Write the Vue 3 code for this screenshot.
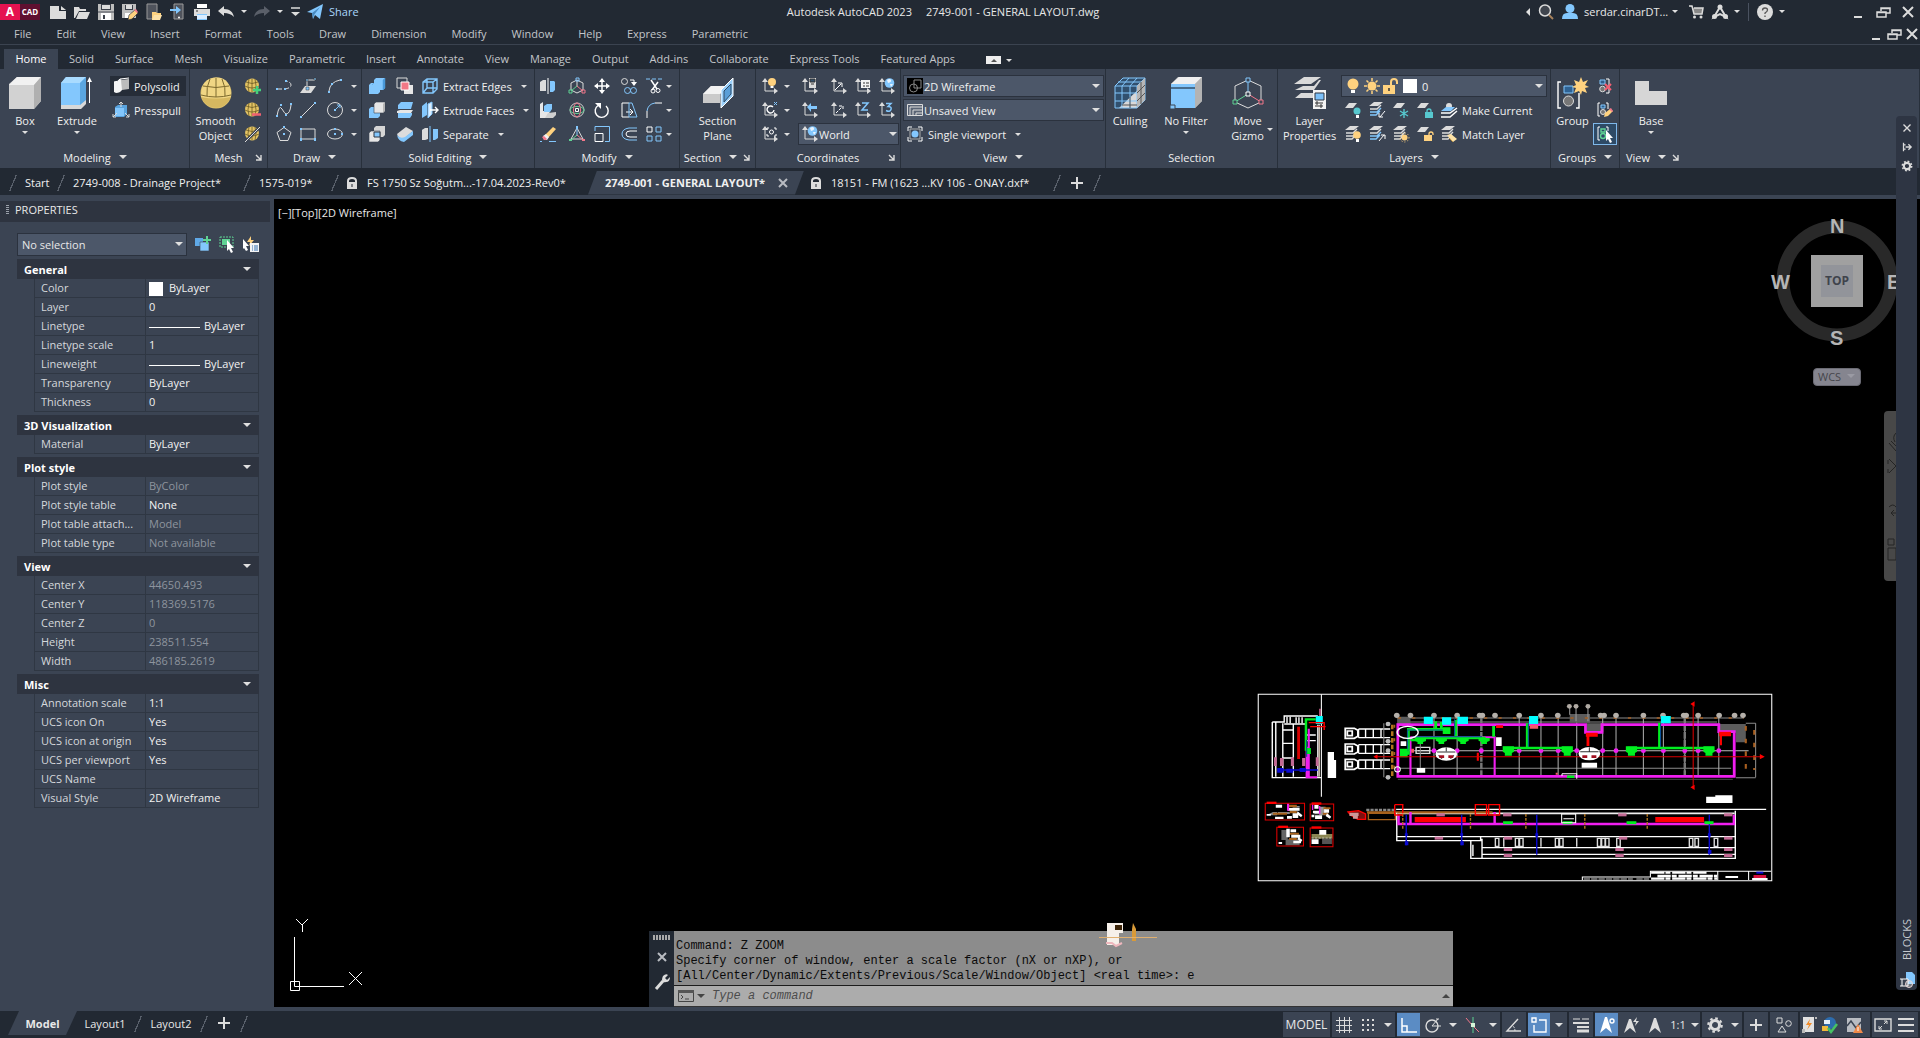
<script setup>
import { h } from 'vue'

const W = '#dcdcdc'
const B = '#83c7fd'
const Y = '#ffd27f'
const G = '#5fd394'
const R = '#f2778a'

const axes = `<path d="M3 2v11h10" fill="none" stroke="${W}"/><path d="M0 4l3-4 3 4zM12 10l4 3-4 3z" fill="${W}"/>`
const sheet = (x, y) => `<path d="M${x + 4} ${y}h8l-4 5h-8z" fill="${W}"/>`
const stack = `<path d="M5 0h9l-5 4H0z" fill="${W}"/><path d="M1 7h7l4-4M1 10h7l4-4M1 13h6l4-4" fill="none" stroke="${W}" stroke-width="1.4"/>`
const stackB = `<path d="M5 0h9l-5 4H0z" fill="${W}"/><path d="M1 7h7l4-4" fill="none" stroke="${W}" stroke-width="1.4"/><path d="M1 10h7l4-4M1 13h6l4-4" fill="none" stroke="${B}" stroke-width="1.4"/>`
const ball = `<circle cx="7" cy="7.500" r="7" fill="#e3c364"/><path d="M0 8Q7 12 14 8M1 4q6 3 12 0M7 1v13M4 1Q2 8 4 14M10 1q2 7 0 13" fill="none" stroke="#6b5a25" stroke-width=".8"/>`

const icons = {
  fileNew: `<path d="M0 2h9v5h7v8H0zM11 2l5 4h-5z" fill="${W}"/>`,
  open: `<path d="M0 3h5l1 2h6v2H5L1 14H0zM5 8h11l-3 7H2z" fill="${W}"/>`,
  save: `<path d="M0 0h16v16H0z" fill="#bdbdbd"/><path d="M3 0h10v6H3z" fill="#3a3f49"/><path d="M4 1h8v4H4z" fill="${W}"/><path d="M3 9h10v7H3z" fill="#fff"/><path d="M5 11h2v4H5z" fill="#3a3f49"/><path d="M0 8h16" stroke="#4a4f59"/>`,
  saveAs: `<path d="M0 0h14v14H0z" fill="#bdbdbd"/><path d="M3 1h8v5H3z" fill="#3a3f49"/><path d="M4 1h6v4H4z" fill="${W}"/><path d="M3 9h7v5H3z" fill="#fff"/><path d="M6 16l1-5 6-5 3 3-6 6z" fill="${Y}" stroke="#222933" stroke-width=".6"/><path d="M12 6l2-1 2 3-1 1z" fill="${R}"/>`,
  openWeb: `<path d="M1 0h10v15H1z" fill="#4f535c" stroke="#9a9a9a"/><path d="M6 8h4l1 1h4v2l-2 5H6z" fill="${Y}"/><path d="M8 11h8l-2 5H6z" fill="#ffe2a8"/>`,
  saveWeb: `<path d="M4 0h9v15H4z" fill="#4f535c" stroke="#9a9a9a"/><path d="M0 5h6V2l5 4-5 4V7H0z" fill="${B}"/><circle cx="9" cy="13.500" r="1" fill="#fff"/>`,
  print: `<path d="M3 0h10v4H3z" fill="#fff"/><path d="M0 5h16v7h-3v-2H3v2H0z" fill="${W}"/><path d="M3 10h10v6H3z" fill="${B}"/><path d="M3 11h10v4H3z" fill="#d9ecff"/><path d="M2 7h2" stroke="#333"/>`,
  undo: `<path d="M0 7l6-5v3c6 0 9 3 10 8-3-3-6-4-10-4v3z" fill="${W}"/>`,
  redo: `<path d="M16 7l-6-5v3C4 5 1 8 0 13c3-3 6-4 10-4v3z" fill="#5a5f69"/>`,
  custom: `<path d="M4 4h9" stroke="${W}" stroke-width="1.500"/><path d="M4 8h9l-4.500 4z" fill="${W}"/>`,
  plane: `<path d="M0 8L16 0l-3 15-5-4-2 4-1-6z" fill="${B}"/><path d="M5 9l8-6-6 8-1 4z" fill="#4789c0"/>`,
  search: `<circle cx="7" cy="6.500" r="5.500" fill="#40454e" stroke="${W}" stroke-width="1.500"/><path d="M11 11l4 4" stroke="#a8825c" stroke-width="2"/>`,
  user: `<circle cx="8" cy="4.500" r="4.500" fill="${B}"/><path d="M0 15q0-6 5-6h6q5 0 5 6z" fill="${B}"/>`,
  cart: `<path d="M1 2h3l2 8h8l1-6H6" fill="#888" stroke="${W}" stroke-width="1.500"/><circle cx="6.500" cy="13" r="1.500" fill="${W}"/><circle cx="13" cy="13" r="1.500" fill="${W}"/>`,
  apps: `<path d="M8 3L2 13l6-3 6 3z" fill="none" stroke="${W}" stroke-width="2"/><circle cx="8" cy="3" r="2.500" fill="${W}"/><circle cx="2.500" cy="12.500" r="2.500" fill="${W}"/><circle cx="13.500" cy="12.500" r="2.500" fill="${W}"/>`,
  help: `<circle cx="8" cy="8" r="8" fill="${W}"/><path d="M5.500 6.500Q5.500 4 8 4t2.500 2q0 1.500-2.500 3v1M8 11.500v1.500" fill="none" stroke="#555" stroke-width="1.300"/>`,
  min: `<path d="M4 13h8" stroke="${W}" stroke-width="2"/>`,
  restore: `<path d="M6 7V4h9v5h-4M2 8h9v5H2zM2 8.500h9M6 4.500h9" fill="none" stroke="${W}" stroke-width="1.500"/>`,
  close: `<path d="M3 3l10 10M13 3L3 13" stroke="${W}" stroke-width="2"/>`,
  closeS: `<path d="M4 4l8 8M12 4l-8 8" stroke="#b9bcc2" stroke-width="2"/>`,
  lock: `<path d="M4 8V6q0-3 4-3t4 3v2" fill="none" stroke="${W}" stroke-width="2"/><path d="M3 7h10v7H3z" fill="${W}"/><path d="M8 9v3" stroke="#222933"/>`,
  plus: `<path d="M8 2v12M2 8h12" stroke="${W}" stroke-width="2"/>`,
  corner: `<path d="M5 6l5 5M10 6v5H5" fill="none" stroke="${W}" stroke-width="1.400"/>`,

  polysolid: `<path d="M1 4q4 0 6-3l2 1v10q-2 3-6 3l-2-1z" fill="#f4f4f4"/><path d="M8 2l8-1v10l-7 1z" fill="#bcbcbc"/><path d="M1 4q4 0 6-3l9-1" fill="none" stroke="#fff"/>`,
  presspull: `<path d="M2 5l3-2h9v9l-3 3H2z" fill="#5aa4df"/><path d="M2 6h9v8H2z" fill="${B}"/><path d="M8 0v5M6 2l2-2 2 2M0 15l4-4M0 12v3h3M12 11l4 4M16 12v3h-3" fill="none" stroke="${W}"/>`,
  meshAdd: ball + `<path d="M12 8v8M8 12h8" stroke="#45cf7d" stroke-width="2.500"/>`,
  meshSub: ball + `<path d="M7 12.500h9" stroke="#ef6070" stroke-width="2.500"/>`,
  meshCrease: ball + `<path d="M0 16L15 1" stroke="#3b4453" stroke-width="3"/><path d="M0 16L15 1" stroke="${W}"/>`,

  pline: `<path d="M1 11h8q6-1 6-4t-5-4" fill="none" stroke="${W}" stroke-dasharray="5 2"/><path d="M0 10h2v2H0zM8 10h2v2H8zM9 2h2v2H9z" fill="${B}"/>`,
  plane3: `<path d="M5 8h11l-5 7H0z" fill="${W}"/><path d="M7 2v9M7 2h8" stroke="${W}" fill="none"/><path d="M6 9h3v3H6zM6 1h2v2H6zM14 0h2v2h-2z" fill="${B}" stroke="#333" stroke-width=".5"/>`,
  arc: `<path d="M2 13Q3 4 13 2" fill="none" stroke="${W}"/><path d="M1 13h2v2H1zM4 5h2v2H4zM13 1h2v2h-2z" fill="${B}"/>`,
  spline: `<path d="M1 14Q3 2 6 7t4 5Q14 12 15 3" fill="none" stroke="${W}"/><path d="M0 13h2v2H0zM4 2h2v2H4zM9 12h2v2H9zM14 1h2v2h-2z" fill="${B}"/>`,
  line: `<path d="M1 15L15 1" stroke="${W}"/><path d="M0 14h2v2H0zM14 0h2v2h-2z" fill="${B}"/>`,
  circle: `<circle cx="8" cy="8" r="7.500" fill="none" stroke="${W}"/><path d="M8 8l5-5M10 3h3v3" fill="none" stroke="${B}"/><path d="M7 7h2v2H7z" fill="${B}"/>`,
  polygon: `<path d="M8 1.500l7 5-3 8H4l-3-8z" fill="none" stroke="${W}"/><path d="M7 7h2v2H7zM7 0h2v2H7z" fill="${B}"/>`,
  rect: `<path d="M1 3h14v10H1z" fill="none" stroke="${W}"/><path d="M0 12h2v3H0zM14 12h2v3h-2zM0 2h2v2H0z" fill="${B}"/>`,
  ellipse: `<ellipse cx="8" cy="8" rx="7.500" ry="5" fill="none" stroke="${W}"/><path d="M7 7h2v2H7zM7 2h2v2H7zM14 7h2v2h-2z" fill="${B}"/>`,

  union: `<path d="M5 2l2-2h9v10l-2 2h-3v2l-2 2H0V7l2-2h3z" fill="${B}"/><path d="M16 0v10l-2 2V2zM5 5l-2 2" fill="#4a98d8" stroke="#4a98d8" stroke-width=".5"/>`,
  subtract: `<path d="M0 7l2-2h9v9l-2 2H0z" fill="${B}"/><path d="M5 2l2-2h9v9l-2 2H5z" fill="#e6e6e6" stroke="#3b4453" stroke-width=".6"/><path d="M16 0v9l-2 2V2z" fill="#b5b5b5"/>`,
  intersect: `<path d="M5 2l2-2h9v9l-2 2H5z" fill="#d5d5d5"/><path d="M0 7l2-2h9v9l-2 2H0z" fill="#e6e6e6" stroke="#3b4453" stroke-width=".6"/><path d="M5 6h6v5H5z" fill="${B}" stroke="#2c3440"/>`,
  interfere: `<path d="M0 0h10v10H0z" fill="#3b4453" stroke="${W}"/><path d="M9 7h7v9H7V9z" fill="#e6e6e6"/><path d="M4 4h8v8H4z" fill="#f27886" stroke="#fff"/>`,
  slice: `<path d="M1 3l3-3h12l-2 7H1zM1 11h14v2l-2 3H1z" fill="${B}"/><path d="M0 9l3-1h13l-2 3H0z" fill="#e6e6e6"/>`,
  thicken: `<path d="M0 8l9-7 7 4-8 7q-6 2-8-4z" fill="#dcdcdc"/><path d="M0 9q3 4 8 2l8-6v4l-9 7q-6-1-7-7z" fill="${B}"/>`,
  extractEdges: `<path d="M1 4l4-3h10v10l-4 4H1zM1 4h10v11M11 4l4-3M5 1v9M1 15l4-5h10" fill="none" stroke="${B}" stroke-width="1.400"/>`,
  extrudeFaces: `<path d="M0 4l5-4v13l-5 3z" fill="${B}"/><path d="M6 2l4-2v12l-4 4z" fill="#dceeff" stroke="${B}"/><path d="M8 8h7M13 5l3 3-3 3" fill="none" stroke="#fff" stroke-width="1.400"/>`,
  separate: `<path d="M0 4l5-2v11l-5 1zM11 3h5v9l-3 2h-2z" fill="${B}"/><path d="M0 4l3-2h3v11l-3 1H0z" fill="#dcdcdc"/><path d="M8 0v16" stroke="${B}"/>`,

  mirror3d: `<path d="M0 4l3-2h3v11H0z" fill="#dcdcdc"/><path d="M10 3h4l1 1v8l-2 2h-3z" fill="${B}"/><path d="M8 0v16" stroke="#fff"/>`,
  align3d: `<path d="M0 2l3-2v9h5l3 3-3 4H0z" fill="#e6e6e6"/><path d="M4 4l3-2h5v5l-2 3H4z" fill="${B}"/><path d="M8 11l8-1v3l-3 3H5z" fill="#cfcfcf"/>`,
  erase: `<path d="M5 9l8-8 3 2-8 9z" fill="${Y}"/><path d="M3 10l3-2 3 3-2 3H4z" fill="#f0f0f0"/><path d="M2 11l2-1 3 3-1 1H4z" fill="${R}"/><path d="M0 15.500h2M9 15.500h7" stroke="${B}"/>`,
  gizmoMove: `<path d="M8 2L2 5v7l6 3 6-3V5zM8 2v6" fill="none" stroke="${W}"/><path d="M8 8l-6 5" stroke="${G}"/><path d="M8 8l6 5" stroke="${R}"/><path d="M7 0h3v3H7z" fill="none" stroke="${B}"/><path d="M0 12h3v3H0z" fill="none" stroke="${G}"/><path d="M13 12h3v3h-3z" fill="none" stroke="${R}"/>`,
  gizmoRot: `<circle cx="8" cy="8" r="7" fill="none" stroke="#c9c9c9"/><ellipse cx="8" cy="8" rx="7" ry="3.500" fill="none" stroke="${G}"/><ellipse cx="8" cy="8" rx="3.500" ry="7" fill="none" stroke="${R}"/><path d="M6.500 6.500h3v3h-3z" fill="none" stroke="#fff"/>`,
  gizmoScale: `<path d="M8 2L2 13h12z" fill="none" stroke="${W}"/><path d="M8 2v8" stroke="${B}"/><path d="M8 9l-6 5" stroke="${G}"/><path d="M8 9l6 5" stroke="${R}"/><path d="M7 0h2v3H7z" fill="${B}"/><path d="M0 13h3v2H0z" fill="${G}"/><path d="M13 13h3v2h-3z" fill="${R}"/>`,
  move: `<path d="M8 1v14M1 8h14" stroke="#fff" stroke-width="1.500"/><path d="M5 4l3-4 3 4zM5 12l3 4 3-4zM4 5L0 8l4 3zM12 5l4 3-4 3z" fill="#fff"/>`,
  rotate: `<path d="M4 3.500A6.500 6.500 0 1 0 12 4" fill="none" stroke="#fff" stroke-width="1.400"/><path d="M1 1h6v6z" fill="#fff"/>`,
  scale: `<path d="M1 7.500h8v8H1z" fill="none" stroke="#fff"/><path d="M1 5V.500h14.500v15H11" fill="none" stroke="${B}"/>`,
  copy: `<circle cx="3.500" cy="3.500" r="3" fill="none" stroke="${W}"/><path d="M9 2h4v4" fill="none" stroke="#fff"/><path d="M10 4h6l-3 4z" fill="#fff"/><circle cx="6.500" cy="12.500" r="3" fill="none" stroke="${B}"/><circle cx="12.500" cy="12.500" r="3" fill="none" stroke="${B}"/>`,
  stretch: `<path d="M8 1H1v14h7" fill="none" stroke="#fff"/><path d="M5 10h6M9 7l3 3-3 3" fill="none" stroke="#fff"/><path d="M8 1h3l5 14H8z" fill="none" stroke="${B}"/>`,
  offset: `<path d="M16 2H8q-7 1-7 6t7 6h8" fill="none" stroke="${B}"/><path d="M16 5H9q-4 0-4 3t4 3h7" fill="none" stroke="#fff"/>`,
  trim: `<path d="M0 1h4M6 1h4M12 1h4" stroke="${B}"/><path d="M5 2l6 9M12 4l-6 8" stroke="#fff" stroke-width="1.500"/><circle cx="7" cy="13" r="2" fill="none" stroke="#fff"/><circle cx="12" cy="12.500" r="2" fill="none" stroke="#fff"/>`,
  fillet: `<path d="M1 16V9" stroke="#fff"/><path d="M1 9q1-7 8-8" stroke="${B}" fill="none"/><path d="M9 1h7" stroke="#fff"/>`,
  array: `<path d="M1 1h5v5H1z" fill="none" stroke="#fff"/><path d="M10 1h5v5h-5zM1 10h5v5H1zM10 10h5v5h-5z" fill="none" stroke="${B}"/>`,

  ucsOn: axes + `<circle cx="10" cy="4" r="4" fill="${Y}"/><path d="M8.500 8h3v2h-3z" fill="#fff"/>`,
  ucsRot: axes + `<path d="M11 5a3.500 3.500 0 1 0 1 3" fill="none" stroke="#fff" stroke-width="1.400"/><path d="M12 0l3 3M15 0l-3 3" stroke="${B}"/>`,
  ucsObj: axes + `<path d="M7 2H5v2M12 2h2v2M7 10H5V8M12 10h2V8" fill="none" stroke="#fff"/><circle cx="9.500" cy="6" r="2" fill="none" stroke="#fff"/>`,
  ucsNamed: axes + `<path d="M7 0h7v10H7z" fill="${W}"/><path d="M8 1h5v3H8zM9 6h3" fill="#35506a" stroke="#333"/>`,
  ucsPrev: axes + `<path d="M5 5l4-4v3h6v3H9v3z" fill="${B}"/>`,
  ucsOrigin: axes + `<path d="M4 12l6-6M7 5h4v4" fill="none" stroke="#fff"/>`,
  ucsZvec: axes + `<path d="M5 11l6-6M8 4h4v4" fill="none" stroke="#fff" stroke-dasharray="3 1"/>`,
  ucsView: axes + `<path d="M6 2h9v8H6z" fill="#f2f2f2"/><path d="M8 5h2M11 5h3M8 8h2M11 8h3" stroke="#333"/>`,
  ucsZ: axes + `<path d="M7 1h6l-6 7h6" fill="none" stroke="${B}" stroke-width="1.500"/>`,
  ucsWorld: axes + `<circle cx="10.500" cy="5" r="4.800" fill="${B}"/><path d="M8 2q3-2 4 0t-3 3zM11 6h3l-2 3z" fill="#e8f4ff"/>`,
  ucs3: axes + `<path d="M7 1.500h5l-3 3q4 0 3 3t-5 1" fill="none" stroke="${B}" stroke-width="1.500"/>`,
  vsWire: `<path d="M0 0h16v16H0z" fill="#000"/><path d="M7 2h7v8H7z" fill="none" stroke="#8a8a8a"/><circle cx="6.500" cy="10" r="4" fill="none" stroke="#8a8a8a"/>`,
  viewIco: `<path d="M.500 2.500h15v11H.500z" fill="#5a6475" stroke="${W}"/><path d="M3 13V5h12M6 13V8h9M9 13v-2h6" fill="none" stroke="${W}"/>`,
  viewport: `<path d="M1 5V1h4M11 1h4v4M15 11v4h-4M5 15H1v-4" fill="none" stroke="#fff"/><path d="M3 3h10v10H3z" fill="none" stroke="#aaa"/><circle cx="8" cy="8" r="3.500" fill="${B}"/>`,

  layOff: sheet(0, 1) + `<circle cx="12" cy="9" r="3.500" fill="#57c8cf"/><path d="M11 13h3v3h-3z" fill="#fff"/>`,
  layIso: stackB + `<path d="M16 9l-5 6M10 11v4h4" fill="none" stroke="#fff"/>`,
  layFrz: sheet(0, 1) + `<path d="M11 7v9M7 9l8 5M15 9l-8 5" stroke="#57c8cf" stroke-width="1.400"/>`,
  layLock: sheet(0, 1) + `<path d="M10 11V9q0-2 2-2t2 2v2" fill="none" stroke="#57c8cf" stroke-width="1.300"/><path d="M8 10h8v6H8z" fill="#57c8cf"/>`,
  layOn: stack + `<circle cx="12" cy="9" r="3.800" fill="${Y}"/><path d="M11 13h3v3h-3z" fill="#fff"/>`,
  layUniso: stackB + `<path d="M10 15l5-6M12 9h4v4" fill="none" stroke="#fff"/>`,
  layThaw: stack + `<circle cx="11.500" cy="11.500" r="3" fill="${Y}"/><circle cx="11.500" cy="11.500" r="4.500" fill="none" stroke="${Y}" stroke-dasharray="1 2"/>`,
  layUnlock: sheet(0, 1) + `<path d="M12 10V8q0-2 2-2t2 2v1" fill="none" stroke="${Y}" stroke-width="1.300"/><path d="M7 9h8v6H7z" fill="${Y}"/>`,
  layCur: `<circle cx="8" cy="4" r="3" fill="${W}"/><path d="M0 9l5-4h9l-4 4z" fill="${B}"/><path d="M0 11h9l7-5M0 15h9l7-6" fill="none" stroke="#fff" stroke-width="1.500"/>`,
  layMatch: stack + `<path d="M6 9l4-1 6 5-4 3z" fill="#ffe3a6"/><path d="M8 12l4 4" stroke="#b78f42"/>`,
  bulb: `<circle cx="8" cy="6" r="5.500" fill="${Y}"/><path d="M6 12h4v3H6z" fill="#fff"/>`,
  sun: `<circle cx="8" cy="8" r="4.500" fill="${Y}"/><path d="M8 0v3M8 13v3M0 8h3M13 8h3M2.500 2.500l2 2M11.500 11.500l2 2M13.500 2.500l-2 2M2.500 13.500l2-2" stroke="${Y}" stroke-width="1.500"/>`,
  unlock: `<path d="M8 7V4q0-3 3-3t3 3v2" fill="none" stroke="${Y}" stroke-width="2"/><path d="M0 7h12v9H0z" fill="${Y}"/><path d="M6 10v3" stroke="#333" stroke-width="1.500"/>`,
  swatch: `<path d="M1 1h14v14H1z" fill="#fff"/>`,

  ungroup: `<path d="M3 2h5v4H3z" fill="#2e5f8c" stroke="${B}"/><circle cx="5.500" cy="11" r="2.800" fill="#777" stroke="${W}"/><path d="M9 1h3v14H9" fill="none" stroke="#fff"/><path d="M8 6l6 6M14 6l-6 6" stroke="#f25f72" stroke-width="2"/>`,
  groupEdit: `<path d="M3 1H1v13h2M9 1h2v6" fill="none" stroke="#fff"/><path d="M4 3h4v3H4z" fill="#2e5f8c" stroke="${B}"/><circle cx="6" cy="10" r="2.500" fill="#777" stroke="${W}"/><path d="M7 15l1-4 5-4 3 2-5 5z" fill="${Y}"/><path d="M12 7l2-1 2 3-1 1z" fill="${R}"/>`,
  groupSel: `<path d="M3 1H1v13h2M9 1h2v4" fill="none" stroke="#fff"/><path d="M4 3h4v3H4z" fill="none" stroke="${G}" stroke-width="1.400"/><circle cx="6" cy="10" r="2.500" fill="none" stroke="${G}" stroke-width="1.400"/><path d="M9 4l7 8h-3l2 4-2 1-2-4-2 2z" fill="#fff"/>`,

  pickadd: `<path d="M0 2h8v8H0z" fill="#5fa8e6"/><path d="M5 6h9v9H5z" fill="${B}" stroke="#3b4453" stroke-width=".6"/><path d="M12 0v8M8 4h8" stroke="${G}" stroke-width="2"/>`,
  selObj: `<path d="M1 1h13v10H1z" fill="none" stroke="${G}" stroke-dasharray="2 1"/><path d="M3 3h8v6H3z" fill="${G}"/><path d="M8 4l7 8h-3l2 4-2 1-2-4-2 2z" fill="#fff"/>`,
  quickSel: `<path d="M8 0L4 6h3l-1 4 5-6H8z" fill="${Y}"/><path d="M0 3l6 7H3l2 4-2 1-2-3-1 1z" fill="#fff"/><path d="M7 7h9v9H7z" fill="#f4f4f4"/><path d="M9 10h1M11 10h4M9 12h1M11 12h4M9 14h1M11 14h4" stroke="#3570b0"/>`,

  grid: `<path d="M3.500 0v16M8.500 0v16M13.500 0v16M0 3.500h16M0 8.500h16M0 13.500h16" stroke="${W}"/>`,
  dots: `<path d="M2 2h2v2H2zM7 2h2v2H7zM12 2h2v2h-2zM2 7h2v2H2zM7 7h2v2H7zM12 7h2v2h-2zM2 12h2v2H2zM7 12h2v2H7zM12 12h2v2h-2z" fill="${W}"/>`,
  ortho: `<path d="M1 1v14h15M1 9h5v6" fill="none" stroke="#fff" stroke-width="1.500"/>`,
  polar: `<circle cx="7" cy="9" r="6" fill="none" stroke="${W}" stroke-width="1.400"/><path d="M7 9h9M7 9l6-7M11 2h3" fill="none" stroke="${W}"/>`,
  iso: `<path d="M1 1l6 7" stroke="${R}"/><path d="M9 10l5 5" stroke="${R}"/><path d="M8 0v6M8 10v6" stroke="${G}"/><path d="M6 6h4v4H6z" fill="#d7f5d9"/>`,
  angle: `<path d="M15 14H1L12 2" fill="none" stroke="${W}" stroke-width="1.400"/><path d="M9 14q0-3-2-5" fill="none" stroke="${W}" stroke-dasharray="2 1"/>`,
  osnap: `<path d="M3 8v7h12V3H8" fill="none" stroke="#fff" stroke-width="1.400"/><path d="M1 1h4v4H1z" fill="none" stroke="#fff" stroke-width="1.400"/>`,
  lweight: `<path d="M0 2h7M9 2h7" stroke="${W}"/><path d="M0 6h16" stroke="${W}" stroke-width="2"/><path d="M4 10h12" stroke="${W}" stroke-width="2"/><path d="M4 14h12" stroke="${W}" stroke-width="3"/>`,
  annoOn: `<path d="M6 0h2l5 16-6-5-6 5z" fill="#fff"/><circle cx="13" cy="4" r="2" fill="none" stroke="#fff" stroke-width="1.400"/>`,
  annoAdd: `<path d="M6 2h2l5 14-6-5-6 5z" fill="${W}"/><path d="M14 0l-4 5h3l-1 4 4-5h-3z" fill="${W}"/>`,
  anno: `<path d="M7 1h2l5 15-6-5-6 5z" fill="${W}"/>`,
  gear: `<circle cx="8" cy="8" r="4.500" fill="none" stroke="${W}" stroke-width="3"/><circle cx="8" cy="8" r="6.700" fill="none" stroke="${W}" stroke-width="2.200" stroke-dasharray="2.600 2.660"/>`,
  shapes: `<path d="M1 1h5v5H1z" fill="none" stroke="${W}"/><circle cx="12.500" cy="6.500" r="2.800" fill="none" stroke="${W}"/><path d="M6 9l4 6H2z" fill="none" stroke="${W}"/>`,
  perf: `<path d="M1 0h11v15H1z" fill="#e2e2e2"/><path d="M8 2L4 8h3l-2 5 5-7H7z" fill="#f28c2a"/><path d="M0 12h3v4H0zM13 0h2v2h-2z" fill="#bbb"/>`,
  trusted: `<circle cx="8" cy="6" r="6" fill="#2d6cad"/><path d="M2 3h6v4H2z" fill="#e6f0fa"/><path d="M0 9h6v5H0z" fill="#f0b93a"/><path d="M6 11l3 4 6-8" fill="none" stroke="#46c264" stroke-width="2.500"/>`,
  graph: `<path d="M0 1h14v14H0z" fill="#b9bcc2"/><path d="M0 9l4-5 5 7 5-6" fill="none" stroke="#3b4453" stroke-width="1.500"/><path d="M11 7l5 9H6z" fill="#f08a4a"/><path d="M11 10v4" stroke="#fff"/>`,
  clean: `<path d="M0 2h16v12H0z" fill="none" stroke="${W}" stroke-width="1.400"/><path d="M9 7l3-3M9 4h3v3M7 9l-3 3M4 9v3h3" fill="none" stroke="${W}"/>`,
  burger: `<path d="M0 2h16M0 8h16M0 14h16" stroke="${W}" stroke-width="2"/>`,
  wrench: `<path d="M2 15l7-8" stroke="${W}" stroke-width="3"/><path d="M9 2q3-3 5-1l-3 3 2 2 3-3q0 5-4 5-4 1-4-2 0-2 1-4z" fill="${W}"/>`,
  prompt: `<path d="M.500 2.500h15v11H.500z" fill="none" stroke="#444"/><path d="M0 2h16v3H0z" fill="#555"/><path d="M3 7l2 2-2 2M7 11h4" fill="none" stroke="#444"/>`,
  autohide: `<path d="M3 2v12M3 5h3M3 11h3M6 8h7M10 4l4 4-4 4" fill="none" stroke="${W}" stroke-width="1.800"/>`,
  blocks: `<path d="M7 0h6l3 3v9H7z" fill="${B}"/><path d="M1 7h8v7H1M3 7v7" fill="#3b4453" stroke="#fff"/><circle cx="10" cy="12" r="3.500" fill="#ffffff55" stroke="#e8d5d5"/>`,

  box: `<path d="M0 7L8 0h24v24l-7 8H0z" fill="#d2d2d2"/><path d="M0 8L8 0h24l-7 8z" fill="#f1f1f1"/><path d="M25 8l7-8v24l-7 8z" fill="#b0b0b0"/>`,
  extrude: `<path d="M0 6l5-6h20v24l-6 5H0z" fill="${B}"/><path d="M0 6l5-6h20l-6 6z" fill="#a9dbff"/><path d="M19 6l6-6v24l-6 5z" fill="#5aa6e0"/><path d="M0 28h19l6-5v4l-5 5H0z" fill="#d8d8d8"/><path d="M28.500 26V3" stroke="#fff"/><path d="M26 5l2.500-5L31 5z" fill="#fff"/>`,
  smooth: `<circle cx="16" cy="16" r="15.500" fill="#dcc06b"/><path d="M1 19a15.500 15.500 0 0 0 30 0Q16 22 1 19z" fill="#d6b860"/><path d="M1 20Q1 1 16 .500T31 20q-15 3-30 0z" fill="#f0d684"/><path d="M1 18q15 4 30 0M3 9q13 3 26 0M16 1v19M10 2Q6 10 7 19M22 2q4 8 3 17" fill="none" stroke="#7d6a2e"/>`,
  section: `<path d="M1 17l8-8h16l-7 8v9H1z" fill="#cacaca"/><path d="M1 17l8-8h16l-7 8z" fill="#f2f2f2"/><path d="M19 13L31 1v18L19 31z" fill="#9ad0fb" stroke="#fff"/><path d="M22 14l7-7v10l-7 8z" fill="#5a9fd8" stroke="#2c4a66"/>`,
  culling: `<path d="M1 9l8-8h22v22l-8 8H1z" fill="#31506e"/><path d="M31 6v17l-8 8H5z" fill="#d8d8d8"/><path d="M1 9l8-8h22v22l-8 8H1zM1 9h22v22M23 9l8-8M8 9v22M16 9v22M1 16h22l8-8M1 24h22l8-8M15 1L8 9M23 1l-7 8M4 5h23v22" fill="none" stroke="${B}"/><path d="M23 31V9l8-8v22z" fill="#b6b6b6"/><path d="M27 5v22M23 16l8-8M23 24l8-8M16 20v11M8 28h15" stroke="#555"/>`,
  nofilter: `<path d="M8 0h24v24l-7 7H1V7z" fill="#c4c4c4"/><path d="M1 7l8-7h23l-7 7z" fill="#f0f0f0"/><path d="M25 7l7-7v24l-7 7z" fill="#b3b3b3"/><path d="M1 7h24v24H1z" fill="${B}"/><path d="M1 11h24" stroke="#35506a" stroke-width="1.500"/><path d="M0 28h5v4H0z" fill="${B}" stroke="#3b4453"/>`,
  gizmo: `<path d="M16 3L3 9v16l13 6 13-6V9z" fill="none" stroke="${W}"/><path d="M16 4v12" stroke="${B}"/><path d="M16 17L3 25" stroke="${G}"/><path d="M16 17l13 8" stroke="${R}"/><path d="M14 1h4v4h-4z" fill="#3b4453" stroke="${B}"/><path d="M1 23h4v4H1z" fill="#3b4453" stroke="${G}"/><path d="M27 23h4v4h-4z" fill="#3b4453" stroke="${R}"/><path d="M14 15h4v4h-4z" fill="#3b4453" stroke="#fff"/>`,
  layerProps: `<path d="M10 0h17L17 7H0zM7 9H0M9 9h11l5-6h2l-7 10H1zM7 16h12v5H1z" fill="#dadada"/><path d="M19 13h13v19H19z" fill="#f4f4f4"/><path d="M21 16h9v7h-9z" fill="#7cc0f8" stroke="#2c3440"/><path d="M21 26h8M21 29h8M23 24v4M27 27v4" stroke="#333"/>`,
  group: `<path d="M4 5H1v26h3M19 31h3V16" fill="none" stroke="#fff" stroke-width="1.400"/><path d="M7 9h9v7H7z" fill="#2f6394" stroke="${B}"/><circle cx="11.500" cy="24" r="5" fill="#777" stroke="${W}"/><path d="M24 0l2 5 5-2-3 5 4 2-4 1 2 5-5-2-1 4-2-4-5 2 2-5-4-1 4-2-2-5 5 2z" fill="${Y}"/>`,
  base: `<path d="M0 4h14v10h18v14H0z" fill="#d6d6d6"/>`,
}

const Ic = (p) =>
  h('svg', {
    width: p.s || 16,
    height: p.s || 16,
    viewBox: p.s ? `0 0 ${p.s} ${p.s}` : '0 0 16 16',
    'aria-hidden': 'true',
    class: 'ic',
    innerHTML: icons[p.n],
  })
Ic.props = ['n', 's']

const menus = ['File', 'Edit', 'View', 'Insert', 'Format', 'Tools', 'Draw', 'Dimension', 'Modify', 'Window', 'Help', 'Express', 'Parametric']
const tabs = ['Home', 'Solid', 'Surface', 'Mesh', 'Visualize', 'Parametric', 'Insert', 'Annotate', 'View', 'Manage', 'Output', 'Add-ins', 'Collaborate', 'Express Tools', 'Featured Apps']
const quick = ['fileNew', 'open', 'save', 'saveAs', 'openWeb', 'saveWeb', 'print']
const draw = ['pline', 'plane3', 'arc', '', 'spline', 'line', 'circle', '', 'polygon', 'rect', 'ellipse', '']
const modify = ['mirror3d', 'gizmoMove', 'move', 'copy', 'trim', '', 'align3d', 'gizmoRot', 'rotate', 'stretch', 'fillet', '', 'erase', 'gizmoScale', 'scale', 'offset', 'array', '']
const coords = ['ucsOn', '', 'ucsNamed', 'ucsOrigin', 'ucsView', 'ucsWorld', 'ucsRot', '', 'ucsPrev', 'ucsZvec', 'ucsZ', 'ucs3', 'ucsObj', '']
const solid = [
  ['union', 'interfere', 'extractEdges', 'Extract Edges'],
  ['subtract', 'slice', 'extrudeFaces', 'Extrude Faces'],
  ['intersect', 'thicken', 'separate', 'Separate'],
]
const layerRows = [
  ['layOff', 'layIso', 'layFrz', 'layLock', 'layCur', 'Make Current'],
  ['layOn', 'layUniso', 'layThaw', 'layUnlock', 'layMatch', 'Match Layer'],
]

const groups = [
  { title: 'General', rows: [['Color', 'ByLayer', 'swatch'], ['Layer', '0'], ['Linetype', 'ByLayer', 'line'], ['Linetype scale', '1'], ['Lineweight', 'ByLayer', 'line'], ['Transparency', 'ByLayer'], ['Thickness', '0']] },
  { title: '3D Visualization', rows: [['Material', 'ByLayer']] },
  { title: 'Plot style', rows: [['Plot style', 'ByColor', 'dim'], ['Plot style table', 'None'], ['Plot table attach...', 'Model', 'dim'], ['Plot table type', 'Not available', 'dim']] },
  { title: 'View', rows: [['Center X', '44650.493', 'dim'], ['Center Y', '118369.5176', 'dim'], ['Center Z', '0', 'dim'], ['Height', '238511.554', 'dim'], ['Width', '486185.2619', 'dim']] },
  { title: 'Misc', rows: [['Annotation scale', '1:1'], ['UCS icon On', 'Yes'], ['UCS icon at origin', 'Yes'], ['UCS per viewport', 'Yes'], ['UCS Name', ''], ['Visual Style', '2D Wireframe']] },
]

const status = [
  [{ n: 'grid', w: 24 }, { n: 'dots', w: 24 }, { c: 1, w: 15 }],
  [{ n: 'ortho', w: 23, on: 1 }, { n: 'polar', w: 26 }, { c: 1, w: 14 }, { n: 'iso', w: 25 }, { c: 1, w: 15 }],
  [{ n: 'angle', w: 24 }],
  [{ n: 'osnap', w: 22, on: 1 }, { c: 1, w: 17 }],
  [{ n: 'lweight', w: 24 }],
  [{ n: 'annoOn', w: 23, on: 1 }, { n: 'annoAdd', w: 26 }, { n: 'anno', w: 22 }, { t: '1:1', w: 24 }, { c: 1, w: 10 }],
  [{ n: 'gear', w: 26 }, { c: 1, w: 14 }],
  [{ n: 'plus', w: 24 }],
  [{ n: 'shapes', w: 28 }],
  [{ n: 'perf', w: 20 }, { n: 'trusted', w: 19 }, { n: 'graph', w: 31 }],
  [{ n: 'clean', w: 22 }, { n: 'burger', w: 24 }],
]

// plan drawing data
const bubbles = [447, 486, 553, 619, 683, 691, 727, 796, 858, 906, 1028, 1038, 1072, 1150, 1206, 1265, 1272, 1306, 1366, 1410, 1434]
const axesX = [553, 619, 796, 858, 907, 960, 1034, 1072, 1150, 1207, 1268, 1306, 1365]
const nodes = [553, 619, 688, 796, 858, 907, 960, 1034, 1072, 1150, 1207, 1268, 1306, 1365]
const ducts = [514, 574, 636, 696]
const diffusers = [765, 933, 1116, 1337]
const trucks = [160, 207, 253]
const doors = [728, 785, 797, 899, 911, 1019, 1031, 1042, 1074, 1281, 1297, 1352]
const pinkTags = [[555, 470], [752, 470], [1080, 470], [1380, 470], [752, 504], [1070, 504], [1380, 504], [752, 522], [1070, 522], [1380, 522], [560, 400], [750, 400], [1078, 400], [1380, 400]]
const details = [[72, 370, 112, 50], [200, 372, 67, 50], [105, 442, 76, 56], [200, 444, 65, 56]]
</script>

<template>
  <div class="app">
    <header class="title">
      <div class="quick">
        <button class="logo" aria-label="Application menu"><b>A</b><span>CAD</span></button>
        <button v-for="q in quick" :key="q" class="ib" :aria-label="q"><Ic :n="q" /></button>
        <button class="ib" aria-label="Undo"><Ic n="undo" /></button>
        <button class="ca" aria-label="Undo list"><i class="caret s"></i></button>
        <button class="ib" aria-label="Redo"><Ic n="redo" /></button>
        <button class="ca" aria-label="Redo list"><i class="caret s"></i></button>
        <button class="ca custom" aria-label="Customize toolbar"><Ic n="custom" /></button>
        <button class="share"><Ic n="plane" />Share</button>
      </div>
      <h1><span>Autodesk AutoCAD 2023</span><span>2749-001 - GENERAL LAYOUT.dwg</span></h1>
      <div class="account">
        <button class="tri" aria-label="Collapse"></button>
        <button class="ib" aria-label="Search"><Ic n="search" /></button>
        <button class="userb"><Ic n="user" /><span>serdar.cinarDT...</span><i class="caret s"></i></button>
        <button class="ib" aria-label="Store"><Ic n="cart" /></button>
        <button class="ib" aria-label="Apps"><Ic n="apps" /></button>
        <i class="caret s"></i>
        <i class="bar"></i>
        <button class="ib" aria-label="Help"><Ic n="help" /></button>
        <i class="caret s"></i>
        <span class="win">
          <button class="ib" aria-label="Minimize"><Ic n="min" /></button>
          <button class="ib" aria-label="Restore"><Ic n="restore" /></button>
          <button class="ib" aria-label="Close"><Ic n="close" /></button>
        </span>
      </div>
    </header>

    <nav class="menu">
      <button v-for="m in menus" :key="m">{{ m }}</button>
      <span class="docwin">
        <button aria-label="Minimize drawing"><Ic n="min" /></button>
        <button aria-label="Restore drawing"><Ic n="restore" /></button>
        <button aria-label="Close drawing"><Ic n="close" /></button>
      </span>
    </nav>

    <nav class="rtabs">
      <button v-for="(t, i) in tabs" :key="t" :class="{ on: i === 0 }">{{ t }}</button>
      <span class="mini"><i></i></span><i class="caret s"></i>
    </nav>

    <div class="ribbon">
      <section class="panel p-modeling">
        <div class="body">
          <button class="big"><Ic n="box" :s="32" />Box<i class="caret s"></i></button>
          <button class="big wide"><Ic n="extrude" :s="32" />Extrude<i class="caret s"></i></button>
          <div class="col">
            <button class="row on"><Ic n="polysolid" />Polysolid</button>
            <button class="row"><Ic n="presspull" />Presspull</button>
          </div>
        </div>
        <div class="foot">Modeling<i class="caret"></i></div>
      </section>
      <section class="panel p-mesh">
        <div class="body">
          <button class="big"><Ic n="smooth" :s="32" />Smooth<br />Object</button>
          <div class="col">
            <button v-for="n in ['meshAdd', 'meshSub', 'meshCrease']" :key="n" class="ib" :aria-label="n"><Ic :n="n" /></button>
          </div>
        </div>
        <div class="foot">Mesh<Ic n="corner" class="cn" /></div>
      </section>
      <section class="panel p-draw">
        <div class="body">
          <button v-for="(n, i) in draw" :key="i" class="cell" :aria-label="n || 'More'"><Ic v-if="n" :n="n" /><i v-else class="caret s"></i></button>
        </div>
        <div class="foot">Draw<i class="caret"></i></div>
      </section>
      <section class="panel p-solid">
        <div class="body">
          <template v-for="r in solid" :key="r[3]">
            <button class="cell" :aria-label="r[0]"><Ic :n="r[0]" /></button>
            <button class="cell" :aria-label="r[1]"><Ic :n="r[1]" /></button>
            <button class="row"><Ic :n="r[2]" />{{ r[3] }}<i class="caret s"></i></button>
          </template>
        </div>
        <div class="foot">Solid Editing<i class="caret"></i></div>
      </section>
      <section class="panel p-modify">
        <div class="body">
          <button v-for="(n, i) in modify" :key="i" class="cell" :aria-label="n || 'More'"><Ic v-if="n" :n="n" /><i v-else class="caret s"></i></button>
        </div>
        <div class="foot">Modify<i class="caret"></i></div>
      </section>
      <section class="panel p-section">
        <div class="body">
          <button class="big"><Ic n="section" :s="32" />Section<br />Plane</button>
        </div>
        <div class="foot">Section<i class="caret"></i><Ic n="corner" class="cn" /></div>
      </section>
      <section class="panel p-coords">
        <div class="body">
          <button v-for="(n, i) in coords" :key="i" class="cell" :aria-label="n || 'More'"><Ic v-if="n" :n="n" /><i v-else class="caret s"></i></button>
          <label class="combo world"><Ic n="ucsWorld" /><select aria-label="UCS"><option>World</option></select><i class="caret"></i></label>
        </div>
        <div class="foot">Coordinates<Ic n="corner" class="cn" /></div>
      </section>
      <section class="panel p-view">
        <div class="body">
          <label class="combo"><Ic n="vsWire" /><select aria-label="Visual style"><option>2D Wireframe</option></select><i class="caret"></i></label>
          <label class="combo"><Ic n="viewIco" /><select aria-label="View"><option>Unsaved View</option></select><i class="caret"></i></label>
          <button class="row"><Ic n="viewport" />Single viewport<i class="caret s"></i></button>
        </div>
        <div class="foot">View<i class="caret"></i></div>
      </section>
      <section class="panel p-selection">
        <div class="body">
          <button class="big"><Ic n="culling" :s="32" />Culling</button>
          <button class="big wide"><Ic n="nofilter" :s="32" />No Filter<i class="caret s"></i></button>
          <button class="big"><Ic n="gizmo" :s="32" />Move<br />Gizmo<i class="caret s side"></i></button>
        </div>
        <div class="foot">Selection</div>
      </section>
      <section class="panel p-layers">
        <div class="body">
          <button class="big"><Ic n="layerProps" :s="32" />Layer<br />Properties</button>
          <div class="col">
            <label class="combo"><Ic n="bulb" /><Ic n="sun" /><Ic n="unlock" /><Ic n="swatch" /><select aria-label="Layer"><option>0</option></select><i class="caret"></i></label>
            <div v-for="r in layerRows" :key="r[5]" class="lrow">
              <button v-for="n in r.slice(0, 4)" :key="n" class="ib" :aria-label="n"><Ic :n="n" /></button>
              <button class="row"><Ic :n="r[4]" />{{ r[5] }}</button>
            </div>
          </div>
        </div>
        <div class="foot">Layers<i class="caret"></i></div>
      </section>
      <section class="panel p-groups">
        <div class="body">
          <button class="big"><Ic n="group" :s="32" />Group</button>
          <div class="col">
            <button class="ib" aria-label="Ungroup"><Ic n="ungroup" /></button>
            <button class="ib" aria-label="Group edit"><Ic n="groupEdit" /></button>
            <button class="ib sel" aria-label="Group selection"><Ic n="groupSel" /></button>
          </div>
        </div>
        <div class="foot">Groups<i class="caret"></i></div>
      </section>
      <section class="panel p-base">
        <div class="body">
          <button class="big"><Ic n="base" :s="32" />Base<i class="caret s"></i></button>
        </div>
        <div class="foot">View<i class="caret"></i><Ic n="corner" class="cn" /></div>
      </section>
    </div>

    <nav class="docs">
      <i class="sl"></i><button class="d1">Start</button>
      <i class="sl"></i><button class="d2">2749-008 - Drainage Project*</button>
      <i class="sl"></i><button class="d3">1575-019*</button>
      <i class="sl"></i><button class="d4"><Ic n="lock" />FS 1750 Sz Soğutm...-17.04.2023-Rev0*</button>
      <button class="cur">2749-001 - GENERAL LAYOUT*<Ic n="closeS" /></button>
      <button class="d5"><Ic n="lock" />18151 - FM (1623 ...KV 106 - ONAY.dxf*</button>
      <i class="sl"></i><button class="add" aria-label="New drawing"><Ic n="plus" /></button><i class="sl"></i>
    </nav>

    <div class="work">
      <aside class="props">
        <h2><i class="grip"></i>PROPERTIES</h2>
        <div class="ptop">
          <label class="combo"><select aria-label="Selection"><option>No selection</option></select><i class="caret"></i></label>
          <button v-for="n in ['pickadd', 'selObj', 'quickSel']" :key="n" class="ib" :aria-label="n"><Ic :n="n" /></button>
        </div>
        <div v-for="g in groups" :key="g.title" class="pg">
          <h3>{{ g.title }}<i class="caret"></i></h3>
          <table>
            <tbody>
              <tr v-for="r in g.rows" :key="r[0]">
                <th scope="row">{{ r[0] }}</th>
                <td :class="r[2]"><i v-if="r[2] === 'line' || r[2] === 'swatch'"></i>{{ r[1] }}</td>
              </tr>
            </tbody>
          </table>
        </div>
      </aside>

      <main class="canvas">
        <div class="vlabel">[−][Top][2D Wireframe]</div>

        <svg class="plan" viewBox="0 0 1568 630" preserveAspectRatio="none" fill="none" aria-label="General layout">
          <path d="M52 43H1516V602H52z" stroke="#fff" stroke-width="3" />
          <path d="M232 43V350" stroke="#fff" stroke-width="3" />
          <!-- cross section -->
          <g stroke="#fff" stroke-width="4">
            <path d="M92 126V293H232M92 126H126V108H222M102 126V290M122 130V290M152 132V290M122 150H152M122 190H152M122 234H152M126 132H190M222 134V290M190 165H216M190 182H216" />
            <path d="M134 110V130M143 110V130M160 112V130M168 112V130M177 112V130" />
            <path d="M226 134V290" stroke="#c9b8a8" />
          </g>
          <path d="M163 140h8v97h-8z" fill="#d80000" />
          <path d="M228 86V110" stroke="#b85a80" stroke-width="5" />
          <path d="M190 200V292H220M196 146V292" stroke="#f01ef0" stroke-width="6" />
          <path d="M188 212V118H216" stroke="#00e820" stroke-width="7" />
          <path d="M188 204h14v18h-14z" fill="#00f020" />
          <path d="M190 180V230" stroke="#0a4c8c" stroke-width="3" />
          <path d="M216 108h20v24h-20z" fill="#0ff" />
          <path d="M196 128h44v22M200 140h44" stroke="#f00" stroke-width="4" />
          <path d="M97 232h8v26h-8zM114 234h10v24h-10zM145 232h9v26h-9zM177 234h9v24h-9zM216 232h8v26h-8z" fill="#c26a94" />
          <path d="M106 270H222" stroke="#0a0ad0" stroke-width="5" />
          <path d="M106 264h18v14h-18zM132 266h20v12h-20zM170 264h18v12h-18z" fill="#0a0ad0" />
          <path d="M250 216h18v24h6v54h-24z" fill="#fff" />

          <!-- trucks -->
          <g v-for="y in trucks" :key="y" stroke="#fff" stroke-width="4">
            <path :d="`M338 ${y - 13}H428M338 ${y + 13}H428M338 ${y - 13}V${y + 13}M358 ${y - 13}V${y + 13}M380 ${y - 13}V${y + 13}M402 ${y - 13}V${y + 13}`" />
            <path :d="`M300 ${y - 15}H326L336 ${y - 9}V${y + 9}L326 ${y + 15}H300zM306 ${y - 7}H320V${y + 7}H306z`" stroke-width="5" />
          </g>

          <!-- plan grid -->
          <g stroke="#8a8a8a" stroke-width="3">
            <path d="M447 114H1436M410 130V292M455 265H1400M455 126H1360M1470 130V292M1442 130H1470M1414 293H1470" />
            <path v-for="x in axesX" :key="x" :d="`M${x} 106V286`" stroke="#aaa" />
          </g>
          <path d="M688 110V290M1268 110V290" stroke="#777" stroke-width="7" stroke-dasharray="20 3" />
          <path d="M470 212H1450" stroke="#bbb" stroke-width="3" />
          <path d="M448 110h38v22h-38zM988 130h48v26h-48zM940 102h58v26h-58zM1364 132h50v26h-50zM1414 132h28v55h-28z" fill="#5c5c5c" />
          <path d="M940 78V104M958 78V124M992 78V124" stroke="#999" stroke-width="3" />
          <path d="M450 114H1436M440 134V288" stroke="#a85f20" stroke-width="5" stroke-dasharray="9 32" />
          <path d="M1442 138V280M1466 150V270" stroke="#a85f20" stroke-width="6" stroke-dasharray="14 24" />
          <path d="M434 134V288" stroke="#b3741e" stroke-width="7" stroke-dasharray="14 6" />
          <circle v-for="x in bubbles" :key="x" :cx="x" cy="106" r="8" fill="#b5b0aa" />
          <circle v-for="x in [939, 958, 992]" :key="x" :cx="x" cy="79" r="7" fill="#b0aaa3" />
          <circle v-for="y in [132, 184, 212, 292]" :key="y" cx="422" :cy="y" r="7" fill="#bbb" />

          <!-- walls -->
          <path d="M450 298H1405" stroke="#666" stroke-width="2" />
          <path d="M450 134H985V157H1032V134H1365V155H1409V289H450z" stroke="#f01ef0" stroke-width="8" />
          <path d="M486 170V290M486 172H726V290" stroke="#f01ef0" stroke-width="6" />
          <circle v-for="x in nodes" :key="x" :cx="x" cy="212" r="7" fill="#f01ef0" />

          <!-- ventilation -->
          <g stroke="#00ee20" stroke-width="8">
            <path d="M480 224V148H590M558 124V148M574 126V150M615 120V170M500 174H700M486 180H530M819 130V203M750 204H945M1196 128V203M1105 204H1350M723 138V170" />
          </g>
          <path d="M478 214V150H590M612 118V166M822 130V200M1199 130V200M492 170H690" stroke="#0a4c9c" stroke-width="3" />
          <path v-for="x in ducts" :key="x" :d="`M${x - 16} 174h32v8l-8 4v6h-16v-6l-8-4z`" fill="#00f020" />
          <path v-for="x in diffusers" :key="x" :d="`M${x - 16} 199h32v16l-6 4v8h-20v-8l-6-4z`" fill="#00f020" />
          <path d="M578 142h22v20h-22zM456 206h22v26h-22z" fill="#00f020" />
          <path d="M524 110h26v22h-26zM576 112h26v22h-26zM620 110h30v22h-30zM824 108h26v24h-26zM1200 108h28v22h-28z" fill="#0ff" />
          <path d="M988 160h8v38h-8zM1368 160h6v36h-6zM730 136h20v8h-20zM675 218h6v24h-6zM986 158h34v12h-34zM1366 155h34v14h-34z" fill="#f00" />
          <path d="M826 134h24v12h-24zM488 206h8v12h-8zM900 278h6v6h-6z" fill="#f2596a" />
          <path d="M388 230H1490M1292 70V322" stroke="#d80000" stroke-width="3" />

          <g fill="#fff">
            <ellipse cx="588" cy="222" rx="31" ry="20" />
            <ellipse cx="996" cy="221" rx="31" ry="20" />
            <path d="M974 248h44v15h-44zM504 264h24v14h-24zM730 172h16v26h-16zM458 184h16v14h-16z" />
          </g>
          <path d="M562 216H614M588 202V214M970 215H1022M996 202V214M566 226l10 10M610 226l-10 10" stroke="#333" stroke-width="3" />
          <path d="M568 226h14v8h-14zM594 226h14v8h-14zM976 226h14v8h-14zM1002 226h14v8h-14z" fill="#a01020" />
          <ellipse cx="478" cy="157" rx="30" ry="18" stroke="#fff" stroke-width="4" />
          <path d="M502 202H541V220H502zM506 212H540" stroke="#ddd" stroke-width="4" />
          <path d="M514 192V264" stroke="#888" stroke-width="3" />
          <circle cx="449" cy="268" r="8" stroke="#fff" stroke-width="3" />
          <path d="M918 281H960V296M918 281V288" stroke="#fff" stroke-width="3" />
          <path d="M932 286h22v8h-22z" fill="#00f020" />
          <path d="M380 230l12-7v14zM1482 222l14 8-14 8zM1284 72l12-8v16zM1284 322l12-8v16z" fill="#f00" />

          <!-- elevation -->
          <path d="M445 388H1500" stroke="#fff" stroke-width="4" />
          <path d="M360 390H445" stroke="#888" stroke-width="8" stroke-dasharray="9 3" />
          <path d="M366 400H443V419H366z" stroke="#a8621c" stroke-width="4" />
          <path d="M450 400H1410" stroke="#eee" stroke-width="5" />
          <path d="M362 397H720" stroke="#a8621c" stroke-width="7" />
          <path d="M447 398V482H686V470M658 482H690V535H1412V392M658 482V535H690M447 470H1410M690 503H1410M690 523H1410M690 476V535M664 494V528" stroke="#fff" stroke-width="4" />
          <path v-for="x in doors" :key="x" :d="`M${x} 475h10v24h-10z`" stroke="#ddd" stroke-width="4" />
          <path d="M858 474V500M960 474V500M752 474V500" stroke="#ddd" stroke-width="4" />
          <path d="M452 406V432H1408V404M486 396V432M726 396V432" stroke="#f01ef0" stroke-width="7" />
          <path d="M498 411h146v16H498zM1184 411h139v16h-139z" fill="#f00" />
          <path d="M474 404V496M632 404V496M846 404V524M1338 404V524" stroke="#0a0ad0" stroke-width="4" />
          <path d="M470 460h8v8h-8zM470 484h10v12h-10zM628 460h8v8h-8zM628 484h10v12h-10zM842 460h8v10h-8zM1334 460h8v10h-8zM1334 510h10v12h-10z" fill="#0a0ad0" />
          <path d="M464 402V446M657 402V446M815 402V446M983 402V446M1161 402V446" stroke="#b3741e" stroke-width="4" stroke-dasharray="8 4" />
          <path v-for="(t, i) in pinkTags" :key="i" :d="`M${t[0]} ${t[1]}h24v9h-24z`" fill="#c26a94" />
          <path d="M750 424h28v9h-28zM920 424h28v9h-28zM1102 424h28v9h-28zM1324 424h26v9h-26z" fill="#00f020" />
          <path d="M917 402H957V428H917zM922 416H952" stroke="#fff" stroke-width="3" />
          <path d="M441 374H464V400M441 374V405H464M671 374H703V405H671zM709 374H740V405H709z" stroke="#f00" stroke-width="4" />
          <path d="M308 396l30-4 20 10v16h-22l-20-12z" fill="#7a1010" stroke="#f00" stroke-width="4" />
          <path d="M312 398h26v10h-26zM322 408h14v8h-14z" fill="#c99" />

          <!-- details -->
          <path d="M78 404l16-8h12v10h-16zM108 396h34v6h-34zM150 378h20v5h-20z" fill="#888" />
          <path d="M94 398h40v6H94zM138 374h24v8h-24zM142 392h20v8h-20z" fill="#a8621c" />
          <path d="M102 374h18v9h-18zM100 410h24v7h-24zM136 384h34v8h-34zM150 400h16v14h-16zM164 394l14 12-4 6-12-10zM134 408h14v8h-14zM76 402h12v5H76z" fill="#fff" />
          <path d="M137 370V392" stroke="#f01ef0" stroke-width="6" />
          <path d="M226 380h18v26h-18zM212 398h20v5h-20z" fill="#999" />
          <path d="M238 382h20v6h-20zM236 398h16v6h-16z" fill="#a8621c" />
          <path d="M212 374h12v12h-12zM208 392h18v8h-18zM214 406h20v11h-20zM240 388h14v10h-14zM248 400l12 10-4 6-12-8zM204 404h8v8h-8z" fill="#fff" />
          <path d="M207 372V390M227 378V402" stroke="#f01ef0" stroke-width="4" />
          <path d="M118 450h18v30h-18zM130 478h40v18h-40z" fill="#666" />
          <path d="M142 458h26v6h-26zM140 474h22v6h-22z" fill="#a8621c" />
          <path d="M132 446h10v26h-10zM144 448h16v9h-16zM146 464h26v9h-26zM152 482h22v8h-22zM166 470l12 10-4 6-10-8zM110 486h10v6h-10zM122 448V494" fill="#fff" />
          <path d="M204 462h60v14h-60z" fill="#8a8552" />
          <path d="M234 476h28v16h-28z" fill="#555" />
          <path d="M226 450h20v14h-20zM204 478h20v14h-20z" fill="#fff" />
          <path d="M204 474H262" stroke="#ddd" stroke-width="2" stroke-dasharray="6 4" />
          <g v-for="(d, k) in details" :key="k">
            <path :d="`M${d[0]} ${d[1]}h${d[2]}v${d[3]}h-${d[2]}z`" stroke="#e00000" stroke-width="3" />
            <path :d="`M${d[0] + 4} ${d[1] - 5}h28v7h-28z`" fill="#f00" />
          </g>
          <path d="M1329 350h26v-4h49v23h-75z" fill="#fff" />

          <!-- title block -->
          <path d="M976 600V591H1170V574H1514M1362 574V600M1450 574V600" stroke="#fff" stroke-width="3" />
          <path d="M980 597H1120M1130 597H1166" stroke="#ccc" stroke-width="3" stroke-dasharray="18 3" />
          <path d="M1172 578H1330M1190 588H1360M1172 596H1360" stroke="#fff" stroke-width="7" stroke-dasharray="38 3 14 5" />
          <path d="M1384 588h36v6h-36zM1460 594h44v6h-44z" fill="#fff" />
          <path d="M1464 585h36v9h-36z" fill="#d8103c" /><path d="M1472 575h20v6h-20z" fill="#0a0ad0" />
        </svg>

        <div class="cube">
          <svg width="130" height="140" viewBox="0 0 130 140" aria-hidden="true">
            <circle cx="67" cy="70" r="54" fill="none" stroke="#292929" stroke-width="13" />
          </svg>
          <b class="n">N</b><b class="w">W</b><b class="e">E</b><b class="so">S</b>
          <button class="top"><span>TOP</span></button>
        </div>
        <button class="wcs">WCS<i></i></button>
        <div class="navbar">
          <svg width="12" height="170" viewBox="0 0 12 170" fill="none" stroke="#242424" aria-hidden="true">
            <path d="M12 22q-4 4-1 9M5 32l7 8M7 30l5 5M5 48l7 7-7 7M4 49v4M4 62v-4M5 96q4-4 7 0M8 102h4M10 99l-3 3 3 3M4 128h6v6H4zM4 137h8v12H4z" />
          </svg>
        </div>

        <svg class="ucs" width="90" height="90" viewBox="0 0 90 90" fill="none" stroke="#fff" aria-label="UCS icon">
          <path d="M6.500 70.500h9v9h-9zM10.500 75.500V26M10.500 75.500H60M12 8l6 6 6-6M18.500 14v7M65 61l13 13M78 61L65 74" />
        </svg>

        <div class="cmd">
          <div class="cside">
            <i class="dotsgrip"></i>
            <button aria-label="Close command line"><Ic n="closeS" /></button>
            <button aria-label="Customize"><Ic n="wrench" /></button>
          </div>
          <div class="cmain">
            <svg class="over" width="60" height="32" viewBox="0 0 60 32" aria-hidden="true">
              <path d="M8 4h16v10h-4v12H8z" fill="#f6f0ea" /><path d="M16 6h7v5h-7z" fill="#3c2408" />
              <path d="M34 4l3 6v12h-4V10z" fill="#d99a38" /><path d="M0 18.500h58" stroke="#e0b070" />
              <path d="M7 24h6l4 3 6-3" fill="none" stroke="#eeb7bd" stroke-width="2" />
            </svg>
            <pre>Command: Z ZOOM
Specify corner of window, enter a scale factor (nX or nXP), or
[All/Center/Dynamic/Extents/Previous/Scale/Window/Object] &lt;real time&gt;: e</pre>
            <div class="cin">
              <Ic n="prompt" /><i class="caret dk"></i>
              <input aria-label="Command" placeholder="Type a command" />
              <i class="caret dk up"></i>
            </div>
          </div>
        </div>
      </main>
    </div>

    <footer class="bottom">
      <nav>
        <button class="cur">Model</button>
        <button>Layout1</button><i class="sl"></i>
        <button>Layout2</button><i class="sl"></i>
        <button aria-label="New layout"><Ic n="plus" /></button><i class="sl"></i>
      </nav>
      <div class="stat">
        <div class="sg"><button class="mdl">MODEL</button></div>
        <div v-for="(g, k) in status" :key="k" class="sg">
          <button v-for="(s, i) in g" :key="i" :class="{ on: s.on }" :style="{ width: s.w + 'px' }" :aria-label="s.n || s.t || 'Options'">
            <Ic v-if="s.n" :n="s.n" /><i v-else-if="s.c" class="caret"></i><template v-else>{{ s.t }}</template>
          </button>
        </div>
      </div>
    </footer>

    <aside class="palette">
      <button aria-label="Close palette"><Ic n="close" /></button>
      <button aria-label="Auto-hide"><Ic n="autohide" /></button>
      <button aria-label="Settings"><Ic n="gear" /></button>
      <span>BLOCKS</span>
      <Ic n="blocks" />
    </aside>
  </div>
</template>

<style>
body { margin: 0; background: #222933; }
.ic { display: block; flex: none; overflow: visible; }
</style>

<style scoped>
.app { position: relative; display: flex; flex-direction: column; min-height: 100vh; overflow: hidden; font: 11px/15px "Open Sans", "Noto Sans", sans-serif; color: #e8e8e8; background: #222933; }
button, select, input { font: inherit; color: inherit; background: none; border: 0; padding: 0; margin: 0; }
button { display: flex; align-items: center; white-space: nowrap; }
h1, h2, h3, pre { margin: 0; font: inherit; }
.ib { width: 24px; height: 24px; justify-content: center; flex: none; }
.caret { flex: none; width: 0; height: 0; border: 4px solid transparent; border-top-color: #e0e0e0; border-bottom: 0; }
.caret.s { border-width: 3px; border-bottom: 0; }
.caret.dk { border-top-color: #444; }
.caret.up { transform: rotate(180deg); }

.title { display: flex; align-items: center; height: 23px; }
.quick { display: flex; align-items: center; width: 360px; }
.logo { width: 40px; height: 16px; margin-right: 6px; background: #5f1030; }
.logo b { width: 20px; height: 16px; background: #e51250; font-size: 12px; line-height: 16px; text-align: center; color: #fff; }
.logo span { flex: 1; font: bold 8px/16px "Open Sans", sans-serif; text-align: center; color: #fff; }
.ca { width: 11px; height: 24px; justify-content: center; }
.ca.custom { width: 20px; }
.quick .ca + .ib { margin-left: 1px; }
.share { gap: 6px; color: #a9d6fb; margin-left: 2px; }
.title h1 { flex: 1; display: flex; justify-content: center; gap: 14px; }
.account { display: flex; align-items: center; width: 394px; }
.tri { width: 0; height: 0; border: 4px solid transparent; border-left: 0; border-right-color: #e0e0e0; margin-right: 4px; }
.userb { gap: 6px; margin: 0 6px 0 4px; }
.userb .caret { margin-left: -2px; }
.account > .caret { margin: 0 4px 0 2px; }
.bar { width: 1px; height: 18px; background: #4a5260; margin: 0 4px; }
.win { display: flex; gap: 1px; margin-left: auto; }

.menu { display: flex; align-items: center; gap: 25px; height: 21px; padding: 0 0 0 14px; border-bottom: 1px solid #3b4350; color: #c3c6ca; box-sizing: border-box; height: 22px; }
.docwin { display: flex; margin-left: auto; gap: 2px; }
.rtabs { display: flex; align-items: flex-end; height: 24px; padding-left: 4px; color: #c3c6ca; }
.rtabs button { height: 20px; padding: 0 10px 1px 11px; }
.rtabs .on { background: #3b4453; color: #fff; width: 54px; justify-content: center; padding: 0 0 1px; }
.mini { width: 15px; height: 8px; background: #eee; margin: 0 5px 5px 21px; display: flex; justify-content: center; align-items: center; }
.mini i { border: 3px solid transparent; border-top: 0; border-bottom-color: #555; }
.rtabs > .caret { margin-bottom: 7px; }

.ribbon { display: flex; height: 99px; background: #3b4453; padding-left: 1px; color: #f0f0f0; }
.panel { display: flex; flex-direction: column; flex: none; box-sizing: border-box; border-right: 1px solid #28303b; }
.body { display: flex; height: 72px; margin-top: 5px; }
.foot { position: relative; display: flex; align-items: center; justify-content: center; gap: 8px; height: 22px; }
.foot .cn { position: absolute; right: 0; top: 3px; }
.big { flex-direction: column; width: 46px; padding-top: 3px; text-align: center; justify-content: flex-start; height: 72px; flex: none; line-height: 15px; }
.big svg { margin-bottom: 4px; }
.big .caret { margin-top: 3px; }
.col { display: flex; flex-direction: column; }
.row { height: 24px; gap: 5px; }
.row .caret { margin-left: 4px; }
.cell { height: 24px; justify-content: center; min-width: 0; }

.p-modeling { width: 189px; }
.p-modeling .body { padding-left: 1px; }
.p-modeling .big.wide { width: 58px; }
.p-modeling .col { width: 76px; margin-left: 4px; }
.p-modeling .row { padding-left: 3px; }
.p-modeling .row.on { height: 20px; margin: 2px 0; background: #262d38; }
.p-mesh { width: 78px; }
.p-mesh .big { width: 51px; }
.p-draw { width: 94px; }
.p-draw .body { display: grid; grid-template: repeat(3, 24px) / 24px 24px 30px 8px; padding-left: 4px; }
.p-solid { width: 173px; }
.p-solid .body { display: grid; grid-template: repeat(3, 24px) / 24px 32px 1fr; padding-left: 3px; }
.p-solid .row { padding-left: 1px; }
.p-modify { width: 145px; }
.p-modify .body { display: grid; grid-template: repeat(3, 24px) / 26px 32px 18px 36px 14px 16px; }
.p-section { width: 76px; }
.p-section .big { width: 75px; }
.p-section .foot { padding-right: 14px; }
.p-coords { width: 145px; }
.p-coords .body { display: grid; grid-template: repeat(3, 24px) / 28px 6px 40px 18px 30px 18px; }
.p-view { width: 205px; }
.p-view .body { flex-direction: column; padding: 0 1px 0 2px; }
.p-view .row { padding-left: 4px; }
.p-selection { width: 172px; }
.p-selection .big { width: 48px; position: relative; }
.p-selection .big.wide { width: 64px; }
.p-selection .big:last-child { width: 59px; }
.side { position: absolute; right: 4px; top: 51px; }
.p-layers { width: 273px; }
.p-layers .big { width: 63px; }
.p-layers .col { width: 206px; }
.lrow { display: flex; }
.lrow .row { padding-left: 4px; }
.p-groups { width: 69px; }
.p-groups .big { width: 42px; padding-left: 1px; }
.p-groups .sel { height: 22px; margin-top: 1px; background: #2e4a66; outline: 1px solid #7fb8ea; outline-offset: -1px; }
.p-base { flex: 1; }
.p-base .big { width: 62px; }
.p-base .foot { width: 64px; padding-right: 12px; box-sizing: border-box; }

.combo { position: relative; display: flex; align-items: center; box-sizing: border-box; height: 22px; margin: 1px 0; padding: 0 3px; background: #4c5769; border: 1px solid #2b323e; }
.combo select { appearance: none; flex: 1; min-width: 0; padding-left: 1px; outline: 0; }
.combo option { color: #222; }
.world { grid-column: 3 / 7; margin: 1px -3px 1px 8px; padding: 0 1px 0 3px; }
.p-layers .combo { gap: 3px; }

.docs { display: flex; align-items: center; height: 27px; color: #f0f0f0; padding: 2px 0 0 5px; box-sizing: border-box; }
.sl { flex: none; width: 16px; height: 16px; background: linear-gradient(113deg, transparent 47%, #59606b 47%, #59606b 53%, transparent 53%); }
.docs button { box-sizing: content-box; height: 24px; flex: none; padding-left: 4px; }
.docs .d1 { width: 28px; }
.docs .d2 { width: 166px; }
.docs .d3 { width: 68px; }
.docs .d4 { width: 244px; gap: 7px; padding-left: 1px; }
.cur { background: #3b4453; clip-path: polygon(9px 0, 100% 0, calc(100% - 9px) 100%, 0 100%); font-weight: bold; }
.docs .cur { width: 199px; padding-left: 17px; gap: 10px; }
.docs .d5 { width: 241px; gap: 7px; }
.docs .add { width: 24px; padding: 0; justify-content: center; }

.work { flex: 1; display: flex; border: solid #3b4453; border-width: 4px 0; box-sizing: border-box; }
.props { flex: none; width: 274px; background: #3b4453; }
.props h2 { display: flex; align-items: center; gap: 6px; width: 270px; height: 21px; margin-top: 2px; background: #2e3440; padding: 0 0 4px 6px; box-sizing: border-box; }
.grip { width: 3px; height: 9px; background: repeating-linear-gradient(#9aa0aa 0 1px, transparent 1px 2px); }
.ptop { display: flex; align-items: center; padding: 10px 0 3px 17px; }
.ptop .combo { width: 170px; height: 23px; margin: 0 4px 0 0; }
.pg { width: 242px; margin: 0 0 3px 17px; }
.pg h3 { display: flex; align-items: center; justify-content: space-between; height: 20px; padding: 0 8px 0 7px; background: #2e3440; font-weight: bold; color: #fff; }
.pg table { border-collapse: separate; border-spacing: 0; table-layout: fixed; width: 225px; margin-left: 17px; }
.pg th, .pg td { box-sizing: border-box; height: 19px; padding: 0; font-weight: normal; text-align: left; line-height: 18px; border: solid #2f3743; border-width: 0 1px 1px 0; white-space: nowrap; }
.pg th { width: 112px; padding-left: 6px; border-left-width: 1px; color: #d5d8dc; }
.pg td { padding-left: 3px; color: #f2f2f2; }
.pg td.dim { color: #8e949e; }
.pg td i { display: inline-block; vertical-align: middle; width: 14px; height: 14px; background: #fff; margin: 0 6px 0 0; }
.pg td.line i { width: 51px; height: 1px; margin-right: 4px; }

.canvas { position: relative; flex: 1; background: #000; overflow: hidden; }
.vlabel { padding: 6px 4px; }
.plan { position: absolute; right: 130px; bottom: 117px; width: 550px; height: 210px; }
.cube { position: absolute; right: 20px; top: 12px; width: 130px; height: 140px; }
.cube b { position: absolute; font: bold 20px/20px "Liberation Sans", sans-serif; color: #b5b5b5; }
.n { left: 60px; top: 5px; }
.so { left: 60px; top: 117px; }
.w { left: 1px; top: 61px; }
.e { left: 117px; top: 61px; }
.top { position: absolute; left: 41px; top: 44px; width: 52px; height: 52px; background: #a0a0a0; justify-content: center; }
.top span { width: 32px; height: 32px; background: #92949a; font: bold 12px/32px "Open Sans", sans-serif; color: #3f434c; text-align: center; }
.wcs { position: absolute; right: 59px; top: 169px; width: 48px; height: 18px; box-sizing: border-box; padding: 0 0 2px 4px; gap: 6px; border-radius: 4px; background: #85858f; border: 1px solid #6b6b74; color: #46464c; }
.wcs i { border: 4px solid transparent; border-top-color: #9a9aa3; border-bottom: 0; }
.navbar { position: absolute; right: 20px; top: 212px; width: 16px; height: 170px; background: #484848; border-radius: 4px; }
.ucs { position: absolute; left: 10px; bottom: 6px; }

.cmd { position: absolute; left: 375px; bottom: 0; width: 804px; display: flex; }
.cside { width: 25px; background: #222933; display: flex; flex-direction: column; align-items: center; gap: 9px; }
.dotsgrip { width: 17px; height: 5px; margin-top: 4px; background: repeating-linear-gradient(90deg, #aaa 0 2px, transparent 2px 3px); }
.cmain { position: relative; flex: 1; }
.cmain pre { font: 12px/15px "Liberation Mono", monospace; color: #0a0a0a; background: #8c8c8c; padding: 8px 2px 1px; border-bottom: 1px solid #1c1c1c; }
.over { position: absolute; left: 425px; top: -12px; }
.cin { display: flex; align-items: center; height: 20px; background: #acacac; padding: 0 3px 0 4px; gap: 3px; border-bottom: 1px solid #333; }
.cin input { flex: 1; margin-left: 4px; font: italic 12px/16px "Liberation Mono", monospace; outline: 0; }
.cin input::placeholder { color: #4c4c4c; opacity: 1; }

.bottom { display: flex; justify-content: space-between; height: 27px; }
.bottom nav { display: flex; align-items: flex-start; padding-left: 8px; }
.bottom nav button { height: 24px; width: 42px; justify-content: center; }
.bottom nav .cur { width: 69px; margin-right: 7px; clip-path: polygon(11px 0, 100% 0, calc(100% - 11px) 100%, 0 100%); }
.bottom nav .sl { margin: 5px 4px; }
.bottom nav button:nth-of-type(4) { width: 16px; }
.stat { display: flex; gap: 2px; padding-right: 2px; }
.sg { display: flex; align-items: center; height: 25px; margin-top: 1px; background: #3b4453; }
.sg button { height: 23px; justify-content: center; }
.sg .on { background: #5b8cc4; }
.sg .mdl { width: 47px; font-size: 12px; }

.palette { position: absolute; right: 3px; top: 116px; bottom: 48px; width: 21px; box-sizing: border-box; display: flex; flex-direction: column; align-items: center; background: #2e3543; border-radius: 4px; padding: 2px 0; }
.palette button { height: 19px; width: 12px; overflow: hidden; justify-content: center; }
.palette button svg { transform: scale(.7); }
.palette span { margin: auto 0 12px; writing-mode: vertical-rl; transform: rotate(180deg); color: #c6c9ce; }
</style>
